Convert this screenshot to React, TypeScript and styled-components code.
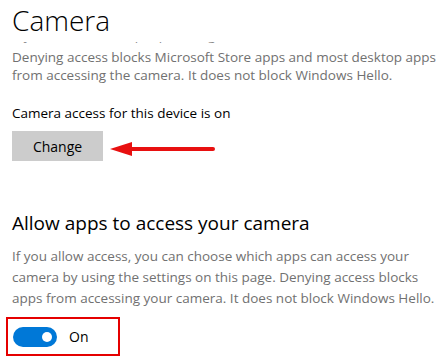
import React from "react";
import styled, { createGlobalStyle } from "styled-components";

const GlobalStyle = createGlobalStyle`
  html, body {
    margin: 0;
    padding: 0;
    background: #ffffff;
  }
  body {
    font-family: "Open Sans", "Noto Sans", sans-serif;
    color: #000;
  }
`;

const Page = styled.div`
  width: 437px;
  height: 361px;
  overflow: hidden;
  padding-left: 12px;
  box-sizing: border-box;
  display: flex;
  flex-direction: column;
`;

const Title = styled.h1`
  margin: 0;
  font-size: 28px;
  font-weight: 300;
  line-height: 40px;
`;

// the previous paragraph, scrolled up under the title: only its descenders show
const Clipped = styled.div`
  margin-top: 2px;
  height: 3px;
  overflow: hidden;
`;

const ClippedText = styled.p`
  margin: -16px 0 0;
  font-size: 13.5px;
  line-height: 18px;
  color: #8a8a8a;
  white-space: nowrap;
`;

const Description = styled.p<{ $top: number; $line: number }>`
  margin: ${(p) => p.$top}px 0 0;
  font-size: 13.5px;
  line-height: ${(p) => p.$line}px;
  color: #717171;
  white-space: nowrap;
`;

const Label = styled.div`
  margin-top: 19px;
  font-size: 13.5px;
  line-height: 20px;
`;

const ButtonRow = styled.div`
  display: flex;
  align-items: center;
  gap: 7px;
  margin-top: 8px;

  svg {
    margin-top: 6px;
  }
`;

const Button = styled.button`
  width: 91px;
  height: 30px;
  border: 0;
  background: #cccccc;
  font-family: inherit;
  font-size: 14px;
  color: #000;
  padding: 0;
`;

const Heading = styled.h2`
  margin: 48px 0 0;
  font-size: 19px;
  font-weight: 400;
  line-height: 28px;
`;

const ToggleBox = styled.div`
  margin: 8px 0 0 -6px;
  width: 114px;
  height: 39px;
  box-sizing: border-box;
  border: 2px solid #e50000;
  display: flex;
  align-items: center;
  padding-left: 5px;
  gap: 12px;
`;

const Track = styled.div<{ $on: boolean }>`
  width: 44px;
  height: 20px;
  border-radius: 10px;
  background: ${(p) => (p.$on ? "#0078d7" : "#ffffff")};
  display: flex;
  align-items: center;
  justify-content: ${(p) => (p.$on ? "flex-end" : "flex-start")};
  padding: 0 5px;
  box-sizing: border-box;
`;

const Knob = styled.div`
  width: 10px;
  height: 10px;
  border-radius: 50%;
  background: #ffffff;
`;

const ToggleText = styled.span`
  font-size: 14px;
`;

const Arrow = () => (
  <svg width="106" height="16" viewBox="0 0 106 16">
    <line x1="16" y1="8" x2="103" y2="8" stroke="#e81010" strokeWidth="4" strokeLinecap="round" />
    <polygon points="0,8 22,1 22,15" fill="#e81010" />
  </svg>
);

export default function App() {
  return (
    <>
      <GlobalStyle />
      <Page>
        <Title>Camera</Title>
        <Clipped aria-hidden>
          <ClippedText>
            If you allow access, people using this device will be able to choose
          </ClippedText>
        </Clipped>
        <Description $top={3} $line={18}>
          Denying access blocks Microsoft Store apps and most desktop apps
          <br />
          from accessing the camera. It does not block Windows Hello.
        </Description>
        <Label>Camera access for this device is on</Label>
        <ButtonRow>
          <Button>Change</Button>
          <Arrow />
        </ButtonRow>
        <Heading>Allow apps to access your camera</Heading>
        <Description $top={9} $line={21}>
          If you allow access, you can choose which apps can access your
          <br />
          camera by using the settings on this page. Denying access blocks
          <br />
          apps from accessing your camera. It does not block Windows Hello.
        </Description>
        <ToggleBox>
          <Track $on>
            <Knob />
          </Track>
          <ToggleText>On</ToggleText>
        </ToggleBox>
      </Page>
    </>
  );
}
